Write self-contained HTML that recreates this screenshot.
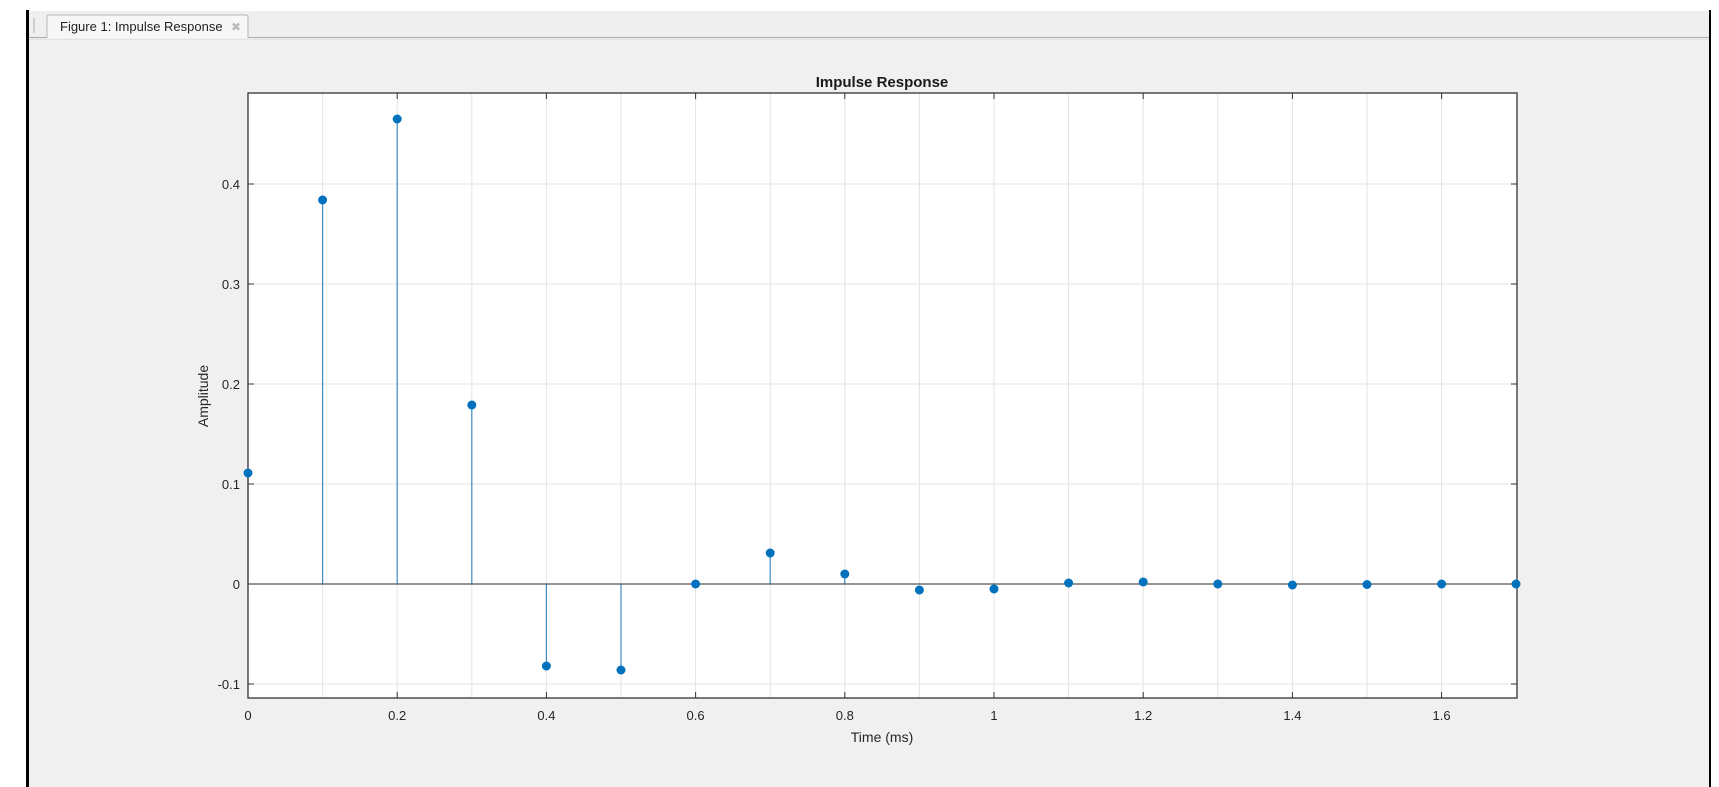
<!DOCTYPE html>
<html><head><meta charset="utf-8"><style>
html,body{margin:0;padding:0;background:#fff;}
svg{display:block;font-family:"Liberation Sans",Arial,sans-serif;}
</style></head><body>
<svg width="1719" height="787" viewBox="0 0 1719 787" xmlns="http://www.w3.org/2000/svg">
<rect x="0" y="0" width="1719" height="787" fill="#fff"/>
<rect x="26" y="11" width="1685" height="776" fill="#f0f0f0"/>
<rect x="26" y="10" width="3" height="777" fill="#000"/>
<rect x="1709" y="10" width="2" height="777" fill="#000"/>
<rect x="29" y="12" width="1680" height="25" fill="#efefef"/>
<line x1="29" y1="37.5" x2="1709" y2="37.5" stroke="#a8a8a8"/>
<line x1="29" y1="39.5" x2="1709" y2="39.5" stroke="#e2e2e2"/>
<rect x="33" y="18" width="2" height="15" fill="#cfcfcf"/>
<path d="M47 38 V17 Q47 15 49 15 H246 Q248 15 248 17 V38" fill="#f7f7f7" stroke="#b4b4b4"/>
<text x="60" y="31" font-size="13" fill="#222">Figure 1: Impulse Response</text>
<text x="231" y="31" font-size="12" fill="#bbb">✖</text>
<!-- axes -->
<rect x="248" y="93" width="1269" height="605" fill="#fff"/>
<g stroke="#e3e3e3" stroke-width="1">
<line x1="322.6" y1="93" x2="322.6" y2="698"/><line x1="397.2" y1="93" x2="397.2" y2="698"/>
<line x1="471.8" y1="93" x2="471.8" y2="698"/><line x1="546.4" y1="93" x2="546.4" y2="698"/>
<line x1="621" y1="93" x2="621" y2="698"/><line x1="695.6" y1="93" x2="695.6" y2="698"/>
<line x1="770.2" y1="93" x2="770.2" y2="698"/><line x1="844.8" y1="93" x2="844.8" y2="698"/>
<line x1="919.4" y1="93" x2="919.4" y2="698"/><line x1="994" y1="93" x2="994" y2="698"/>
<line x1="1068.6" y1="93" x2="1068.6" y2="698"/><line x1="1143.2" y1="93" x2="1143.2" y2="698"/>
<line x1="1217.8" y1="93" x2="1217.8" y2="698"/><line x1="1292.4" y1="93" x2="1292.4" y2="698"/>
<line x1="1367" y1="93" x2="1367" y2="698"/><line x1="1441.6" y1="93" x2="1441.6" y2="698"/>
<line x1="248" y1="684" x2="1517" y2="684"/><line x1="248" y1="484" x2="1517" y2="484"/>
<line x1="248" y1="384" x2="1517" y2="384"/><line x1="248" y1="284" x2="1517" y2="284"/>
<line x1="248" y1="184" x2="1517" y2="184"/>
</g>
<!-- ticks -->
<g stroke="#333" stroke-width="1">
<path d="M397.2 93v6M546.4 93v6M695.6 93v6M844.8 93v6M994 93v6M1143.2 93v6M1292.4 93v6M1441.6 93v6"/>
<path d="M397.2 698v-6M546.4 698v-6M695.6 698v-6M844.8 698v-6M994 698v-6M1143.2 698v-6M1292.4 698v-6M1441.6 698v-6"/>
<path d="M248 684h6M248 484h6M248 384h6M248 284h6M248 184h6M1517 684h-6M1517 484h-6M1517 384h-6M1517 284h-6M1517 184h-6"/>
</g>
<!-- stems -->
<g stroke="#3d8cc4" stroke-width="1.2">
<line x1="248" y1="584" x2="248" y2="473"/>
<line x1="322.6" y1="584" x2="322.6" y2="200"/>
<line x1="397.2" y1="584" x2="397.2" y2="119"/>
<line x1="471.8" y1="584" x2="471.8" y2="405"/>
<line x1="546.4" y1="584" x2="546.4" y2="666"/>
<line x1="621" y1="584" x2="621" y2="670"/>
<line x1="770.2" y1="584" x2="770.2" y2="553"/>
<line x1="844.8" y1="584" x2="844.8" y2="574"/>
</g>
<line x1="248" y1="584" x2="1517" y2="584" stroke="#555" stroke-width="1.2"/>
<rect x="248" y="93" width="1269" height="605" fill="none" stroke="#333" stroke-width="1.3"/>
<g fill="#0072bd">
<circle cx="248" cy="473" r="4.5"/><circle cx="322.6" cy="200" r="4.5"/>
<circle cx="397.2" cy="119" r="4.5"/><circle cx="471.8" cy="405" r="4.5"/>
<circle cx="546.4" cy="666" r="4.5"/><circle cx="621" cy="670" r="4.5"/>
<circle cx="695.6" cy="584" r="4.5"/><circle cx="770.2" cy="553" r="4.5"/>
<circle cx="844.8" cy="574" r="4.5"/><circle cx="919.4" cy="590" r="4.5"/>
<circle cx="994" cy="589" r="4.5"/><circle cx="1068.6" cy="583" r="4.5"/>
<circle cx="1143.2" cy="582" r="4.5"/><circle cx="1217.8" cy="584" r="4.5"/>
<circle cx="1292.4" cy="585" r="4.5"/><circle cx="1367" cy="584.5" r="4.5"/>
<circle cx="1441.6" cy="584" r="4.5"/><circle cx="1516" cy="584" r="4.5"/>
</g>
<!-- labels -->
<g font-size="13" fill="#262626" text-anchor="middle">
<text x="248" y="720">0</text><text x="397.2" y="720">0.2</text><text x="546.4" y="720">0.4</text>
<text x="695.6" y="720">0.6</text><text x="844.8" y="720">0.8</text><text x="994" y="720">1</text>
<text x="1143.2" y="720">1.2</text><text x="1292.4" y="720">1.4</text><text x="1441.6" y="720">1.6</text>
</g>
<g font-size="13" fill="#262626" text-anchor="end">
<text x="240" y="689">-0.1</text><text x="240" y="589">0</text><text x="240" y="489">0.1</text>
<text x="240" y="389">0.2</text><text x="240" y="289">0.3</text><text x="240" y="189">0.4</text>
</g>
<text x="882" y="742" font-size="14" fill="#262626" text-anchor="middle">Time (ms)</text>
<text transform="translate(208 396) rotate(-90)" font-size="14" fill="#262626" text-anchor="middle">Amplitude</text>
<text x="882" y="87" font-size="15" font-weight="bold" fill="#1a1a1a" text-anchor="middle">Impulse Response</text>
</svg>
</body></html>
